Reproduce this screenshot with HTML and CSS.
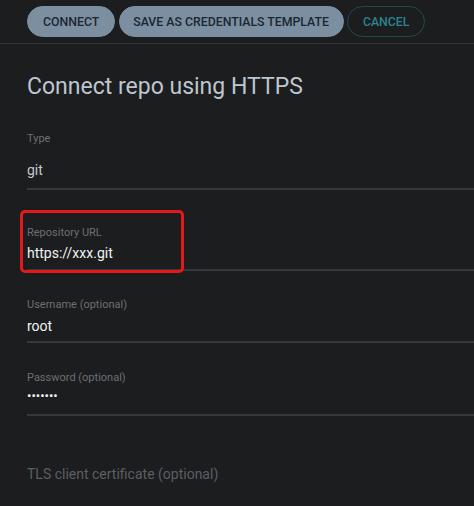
FILE: index.html
```html
<!DOCTYPE html>
<html lang="en">
<head>
<meta charset="utf-8">
<title>Connect repo using HTTPS</title>
<link rel="stylesheet" href="styles.css">
</head>
<body>
<div class="toolbar">
  <button class="btn btn-filled">CONNECT</button>
  <button class="btn btn-filled btn-wide">SAVE AS CREDENTIALS TEMPLATE</button>
  <button class="btn btn-outline">CANCEL</button>
</div>
<div class="content">
  <h1 class="title">Connect repo using HTTPS</h1>
  <div class="field field-type">
    <div class="label">Type</div>
    <div class="value value-dim">git</div>
  </div>
  <div class="field field-repo">
    <div class="label">Repository URL</div>
    <div class="value">https://xxx.git</div>
    <div class="highlight"></div>
  </div>
  <div class="field field-user">
    <div class="label">Username (optional)</div>
    <div class="value">root</div>
  </div>
  <div class="field field-pass">
    <div class="label">Password (optional)</div>
    <div class="value dots">&bull;&bull;&bull;&bull;&bull;&bull;&bull;</div>
  </div>
  <div class="section">TLS client certificate (optional)</div>
</div>
</body>
</html>
```
FILE: styles.css
```css
html, body {
  margin: 0;
  padding: 0;
  background: #1c1d1e;
  font-family: Roboto, "Liberation Sans", sans-serif;
  overflow: hidden;
}
.toolbar {
  display: flex;
  align-items: flex-start;
  gap: 4px;
  height: 37px;
  padding: 6px 0 0 27px;
  border-bottom: 1px solid #333436;
}
.btn {
  height: 31px;
  border-radius: 16px;
  font-family: Roboto, "Liberation Sans", sans-serif;
  font-size: 12.3px;
  font-weight: 500;
  padding: 0 15px;
  cursor: pointer;
}
.btn-filled {
  background: #7b8fa1;
  color: #1c2630;
  border: 1px solid #7b8fa1;
}
.btn-wide {
  padding: 0 14px 0 13px;
}
.btn-outline {
  background: transparent;
  color: #2a8590;
  border: 1px solid #22494f;
  margin-left: -1px;
  padding: 0 15px;
}
.content {
  padding-left: 27px;
}
.title {
  margin: 29px 0 0 0;
  font-size: 23px;
  line-height: 28px;
  font-weight: 400;
  color: #bec6cf;
}
.field {
  position: relative;
  border-bottom: 2px solid #363839;
}
.label {
  font-size: 11px;
  line-height: 16px;
  color: #6a7076;
}
.value {
  font-size: 14px;
  line-height: 20px;
  color: #f2f2f2;
}
.value-dim {
  color: #c4c7cb;
}
.field-type {
  margin-top: 30px;
}
.field-type .value {
  margin-top: 13px;
  padding-bottom: 8px;
}
.field-repo {
  margin-top: 35px;
}
.field-repo .value {
  margin-top: 2px;
  padding-bottom: 6px;
}
.field-user {
  margin-top: 26px;
}
.field-user .value {
  margin-top: 3px;
  padding-bottom: 5px;
}
.field-pass {
  margin-top: 27px;
}
.field-pass .value {
  padding-bottom: 8px;
}
.dots {
  font-size: 13px;
}
.highlight {
  position: absolute;
  top: -15px;
  left: -7px;
  width: 158px;
  height: 57px;
  border: 3px solid #e3191c;
  border-radius: 5px;
}
.section {
  margin-top: 48px;
  font-size: 14px;
  line-height: 20px;
  color: #5a5f65;
}
```
